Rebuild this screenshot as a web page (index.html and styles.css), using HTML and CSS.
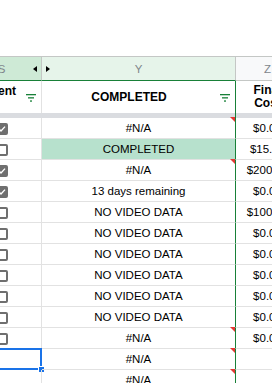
FILE: index.html
```html
<!DOCTYPE html>
<html>
<head>
<meta charset="utf-8">
<link rel="stylesheet" href="styles.css">
</head>
<body>
<div class="sheet">
  <div class="topspace"></div>
  <div class="grid">
    <div class="colhead col-s"><span></span><span class="letter">S</span><span class="arrow-left"></span></div>
    <div class="colhead col-y"><span class="arrow-right"></span><span class="letter">Y</span><span></span></div>
    <div class="colhead col-z"><span></span><span class="letter">Z</span><span></span></div>

    <div class="hcell col-s"><span class="htext htext-s">Payment</span><svg class="filter" width="10" height="8" viewBox="0 0 10 8"><rect x="0" y="0" width="10" height="1.3" fill="#188038"/><rect x="2" y="3.2" width="6" height="1.3" fill="#188038"/><rect x="4" y="6.4" width="2" height="1.3" fill="#188038"/></svg></div>
    <div class="hcell col-y"><span class="htext">COMPLETED</span><svg class="filter" width="10" height="8" viewBox="0 0 10 8"><rect x="0" y="0" width="10" height="1.3" fill="#188038"/><rect x="2" y="3.2" width="6" height="1.3" fill="#188038"/><rect x="4" y="6.4" width="2" height="1.3" fill="#188038"/></svg></div>
    <div class="hcell col-z"><span class="htext htext-z">Final Cost</span></div>

    <div class="band col-s"></div>
    <div class="band col-y"></div>
    <div class="band col-z"></div>

    <div class="cell col-s"><span class="cb on"></span></div>
    <div class="cell col-y"><span>#N/A</span><i class="note"></i></div>
    <div class="cell col-z">$0.00</div>

    <div class="cell col-s"><span class="cb"></span></div>
    <div class="cell col-y done"><span>COMPLETED</span></div>
    <div class="cell col-z">$15.00</div>

    <div class="cell col-s"><span class="cb on"></span></div>
    <div class="cell col-y"><span>#N/A</span><i class="note"></i></div>
    <div class="cell col-z">$200.00</div>

    <div class="cell col-s"><span class="cb on"></span></div>
    <div class="cell col-y"><span>13 days remaining</span></div>
    <div class="cell col-z">$0.00</div>

    <div class="cell col-s"><span class="cb"></span></div>
    <div class="cell col-y"><span>NO VIDEO DATA</span></div>
    <div class="cell col-z">$100.00</div>

    <div class="cell col-s"><span class="cb"></span></div>
    <div class="cell col-y"><span>NO VIDEO DATA</span></div>
    <div class="cell col-z">$0.00</div>

    <div class="cell col-s"><span class="cb"></span></div>
    <div class="cell col-y"><span>NO VIDEO DATA</span></div>
    <div class="cell col-z">$0.00</div>

    <div class="cell col-s"><span class="cb"></span></div>
    <div class="cell col-y"><span>NO VIDEO DATA</span></div>
    <div class="cell col-z">$0.00</div>

    <div class="cell col-s"><span class="cb"></span></div>
    <div class="cell col-y"><span>NO VIDEO DATA</span></div>
    <div class="cell col-z">$0.00</div>

    <div class="cell col-s"><span class="cb"></span></div>
    <div class="cell col-y"><span>NO VIDEO DATA</span></div>
    <div class="cell col-z">$0.00</div>

    <div class="cell col-s"><span class="cb"></span></div>
    <div class="cell col-y"><span>#N/A</span><i class="note"></i></div>
    <div class="cell col-z">$0.00</div>

    <div class="cell col-s selected"><div class="sel"><i class="handle"></i></div></div>
    <div class="cell col-y"><span>#N/A</span><i class="note"></i></div>
    <div class="cell col-z"></div>

    <div class="cell col-s"></div>
    <div class="cell col-y"><span>#N/A</span><i class="note"></i></div>
    <div class="cell col-z"></div>
  </div>
</div>
</body>
</html>
```

FILE: styles.css
```css
html, body {
  margin: 0;
  padding: 0;
  background: #ffffff;
  overflow: hidden;
}

.sheet {
  width: 272px;
  height: 383px;
  overflow: hidden;
  font-family: "Liberation Sans", Arial, sans-serif;
  color: #000000;
}

.topspace {
  height: 56px;
  border-bottom: 1px solid #c4c7c5;
}

.grid {
  display: grid;
  grid-template-columns: 80px 194px 64px;
  margin-left: -38px;
  width: 338px;
}

.colhead {
  height: 24px;
  box-sizing: border-box;
  display: grid;
  grid-template-columns: 1fr auto 1fr;
  align-items: center;
  border-right: 1px solid #c4c7c5;
  border-bottom: 1px solid #188038;
  font-size: 11.5px;
  color: #80868b;
}

.colhead.col-s { background: #ceead6; }
.colhead.col-y { background: #e6f4ea; }
.colhead.col-z { background: #f8f9fa; border-bottom-color: #c4c7c5; }

.arrow-left {
  justify-self: end;
  margin-right: 4px;
  width: 0;
  height: 0;
  border-top: 3.5px solid transparent;
  border-bottom: 3.5px solid transparent;
  border-right: 4px solid #000000;
}

.arrow-right {
  justify-self: start;
  margin-left: 4px;
  width: 0;
  height: 0;
  border-top: 3.5px solid transparent;
  border-bottom: 3.5px solid transparent;
  border-left: 4px solid #000000;
}

.hcell {
  height: 32px;
  box-sizing: border-box;
  display: flex;
  align-items: center;
  border-right: 1px solid #e2e2e2;
  font-weight: bold;
  font-size: 12px;
  overflow: hidden;
}

.hcell.col-y { border-right-color: #188038; }

.htext {
  flex: 1;
  text-align: center;
  white-space: nowrap;
}

.htext-s {
  text-align: right;
  margin-right: 6px;
  margin-bottom: 12px;
}

.htext-z {
  flex: 0 0 auto;
  width: 40px;
  margin: 0 auto;
  white-space: normal;
  line-height: 13px;
}

.filter {
  flex: 0 0 auto;
  margin-right: 5px;
  margin-left: 4px;
  margin-top: 1px;
}

.band {
  height: 5px;
  background: #dadce0;
}

.band.col-y { border-right: 1px solid #188038; }

.cell {
  position: relative;
  height: 21px;
  box-sizing: border-box;
  border-right: 1px solid #e2e2e2;
  border-bottom: 1px solid #e2e2e2;
  display: flex;
  align-items: center;
  justify-content: center;
  font-size: 11.5px;
  white-space: nowrap;
  overflow: visible;
}

.cell.col-y { border-right-color: #188038; }

.cell.done { background: #b7e1cd; }

.cb {
  width: 12px;
  height: 12px;
  box-sizing: border-box;
  border: 2px solid #6f6f6f;
  border-radius: 2px;
  margin-top: 1px;
}

.cb.on {
  background: #6f6f6f url("data:image/svg+xml;utf8,<svg xmlns='http://www.w3.org/2000/svg' width='8' height='8' viewBox='0 0 8 8'><path d='M1.2 4.2 L3 6 L7 1.6' fill='none' stroke='white' stroke-width='1.4'/></svg>") center / 8px 8px no-repeat;
}

.note {
  position: absolute;
  top: -1px;
  right: 0;
  width: 0;
  height: 0;
  border-left: 5px solid transparent;
  border-top: 5px solid #e53935;
}

.sel {
  position: absolute;
  top: -1px;
  left: -2px;
  right: -1px;
  bottom: -1px;
  border: 2px solid #1a73e8;
}

.handle {
  position: absolute;
  right: -5px;
  bottom: -5px;
  width: 5px;
  height: 5px;
  background: #1a73e8;
  border: 1px solid #ffffff;
}
```
